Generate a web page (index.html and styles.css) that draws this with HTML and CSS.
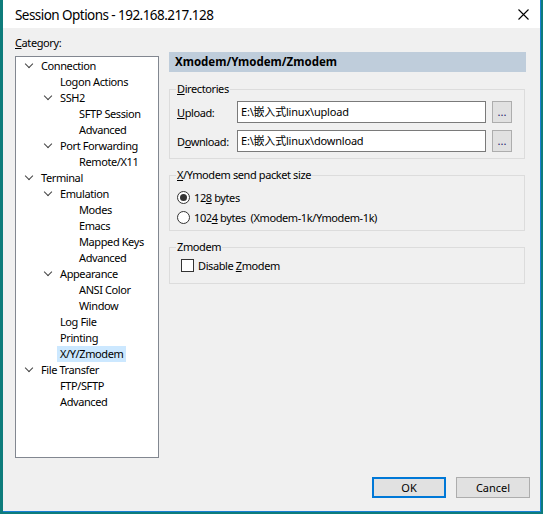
FILE: index.html
```html
<!DOCTYPE html>
<html lang="en">

  <head>
    <meta charset="UTF-8">
    <title>Session Options</title>
    <link rel="stylesheet" href="styles.css">
  </head>

  <body>
    <div class="window">
      <div class="titlebar">
        <span class="title">Session Options - 192.168.217.128</span>
        <svg class="close" width="11" height="11" viewBox="0 0 11 11">
          <path d="M0.5 0.5 L10.5 10.5 M10.5 0.5 L0.5 10.5" stroke="#000" stroke-width="1.1" fill="none"/>
        </svg>
      </div>

      <div class="main">
        <div class="category">
          <div class="cat-label"><u>C</u>ategory:</div>
          <div class="tree">
            <div class="node l0"><span class="tog"><i class="chev"></i></span>Connection</div>
            <div class="node l1"><span class="tog"></span>Logon Actions</div>
            <div class="node l1"><span class="tog"><i class="chev"></i></span>SSH2</div>
            <div class="node l2"><span class="tog"></span>SFTP Session</div>
            <div class="node l2"><span class="tog"></span>Advanced</div>
            <div class="node l1"><span class="tog"><i class="chev"></i></span>Port Forwarding</div>
            <div class="node l2"><span class="tog"></span>Remote/X11</div>
            <div class="node l0"><span class="tog"><i class="chev"></i></span>Terminal</div>
            <div class="node l1"><span class="tog"><i class="chev"></i></span>Emulation</div>
            <div class="node l2"><span class="tog"></span>Modes</div>
            <div class="node l2"><span class="tog"></span>Emacs</div>
            <div class="node l2"><span class="tog"></span>Mapped Keys</div>
            <div class="node l2"><span class="tog"></span>Advanced</div>
            <div class="node l1"><span class="tog"><i class="chev"></i></span>Appearance</div>
            <div class="node l2"><span class="tog"></span>ANSI Color</div>
            <div class="node l2"><span class="tog"></span>Window</div>
            <div class="node l1"><span class="tog"></span>Log File</div>
            <div class="node l1"><span class="tog"></span>Printing</div>
            <div class="node l1"><span class="tog"></span><span class="selected">X/Y/Zmodem</span></div>
            <div class="node l0"><span class="tog"><i class="chev"></i></span>File Transfer</div>
            <div class="node l1"><span class="tog"></span>FTP/SFTP</div>
            <div class="node l1"><span class="tog"></span>Advanced</div>
          </div>
        </div>

        <div class="panel">
          <div class="panel-header">Xmodem/Ymodem/Zmodem</div>

          <fieldset class="group dirs">
            <legend><u>D</u>irectories</legend>
            <div class="dir-row">
              <label><u>U</u>pload:</label>
              <div class="field">E:\嵌入式linux\upload</div>
              <button class="browse">...</button>
            </div>
            <div class="dir-row">
              <label>D<u>o</u>wnload:</label>
              <div class="field">E:\嵌入式linux\download</div>
              <button class="browse">...</button>
            </div>
          </fieldset>

          <fieldset class="group packets">
            <legend><u>X</u>/Ymodem send packet size</legend>
            <div class="opt"><span class="radio checked"></span>12<u>8</u> bytes</div>
            <div class="opt"><span class="radio"></span>102<u>4</u> bytes&nbsp; (Xmodem-1k/Ymodem-1k)</div>
          </fieldset>

          <fieldset class="group zmodem">
            <legend>Zmodem</legend>
            <div class="opt check-opt"><span class="checkbox"></span>Disable <u>Z</u>modem</div>
          </fieldset>
        </div>
      </div>

      <div class="footer">
        <button class="btn default">OK</button>
        <button class="btn">Cancel</button>
      </div>
    </div>
  </body>

</html>
```

FILE: styles.css
```css
body {
  margin: 0;
  background-color: #0e7c7b;
  font-family: "Noto Sans", "Noto Sans CJK SC", sans-serif;
  font-size: 11px;
  letter-spacing: -0.4px;
  color: #000;
}

.window {
  margin-left: 3px;
  width: 537px;
  height: 511px;
  background-color: #f0f0f0;
  border-right: 1px solid #1a7fd4;
  border-bottom: 1px solid #1a7fd4;
  display: flex;
  flex-direction: column;
}

.titlebar {
  height: 28px;
  background-color: #fff;
  display: flex;
  align-items: center;
  padding-left: 12px;
  padding-right: 10px;
}

.title {
  font-size: 13.5px;
  letter-spacing: -0.55px;
  flex: 1;
  padding-top: 1px;
}

.close {
  margin-right: 1px;
  margin-top: 1px;
}

.main {
  display: flex;
  align-items: flex-start;
  padding-left: 12px;
  gap: 10px;
}

.category {
  width: 144px;
  padding-top: 7px;
}

.cat-label {
  line-height: 16px;
  margin-bottom: 5px;
}

.tree {
  height: 399px;
  background-color: #fff;
  border: 1px solid #828790;
  padding-top: 1px;
}

.node {
  height: 16px;
  line-height: 16px;
  display: flex;
  align-items: center;
  padding-left: 4px;
  white-space: nowrap;
}

.node.l1 {
  padding-left: 23px;
}

.node.l2 {
  padding-left: 42px;
}

.tog {
  width: 21px;
  flex: none;
  display: flex;
  align-items: center;
}

.chev {
  display: block;
  width: 5px;
  height: 5px;
  margin-left: 6px;
  margin-top: -4px;
  border-right: 1.3px solid #444;
  border-bottom: 1.3px solid #444;
  transform: rotate(45deg);
}

.selected {
  background-color: #cce8ff;
  padding: 0 3px;
  margin-left: -3px;
}

.panel {
  width: 357px;
  margin-top: 24px;
}

.panel-header {
  height: 20px;
  line-height: 20px;
  background-color: #bfcddb;
  font-weight: bold;
  font-size: 11.5px;
  letter-spacing: 0;
  padding-left: 6px;
}

.group {
  margin: 8px 1px 0 0;
  border: 1px solid #dcdcdc;
  padding: 4px 7px 6px 7px;
}

.group legend {
  padding: 0 1px;
  line-height: 16px;
  margin-left: -1px;
}

.dirs {
  margin-top: 9px;
}

.dir-row {
  display: flex;
  align-items: center;
  height: 22px;
}

.dir-row + .dir-row {
  margin-top: 7px;
}

.dir-row label {
  width: 60px;
}

.field {
  width: 244px;
  height: 20px;
  line-height: 20px;
  background-color: #fff;
  border: 1px solid #7a7a7a;
  padding-left: 3px;
  letter-spacing: -0.2px;
  white-space: nowrap;
}

.browse {
  width: 20px;
  height: 22px;
  margin-left: 6px;
  padding: 0;
  background-color: #e1e1e1;
  border: 1px solid #adadad;
  font-family: inherit;
  font-size: 11px;
  color: #1a1a6e;
  line-height: 20px;
}

.packets {
  padding-bottom: 3px;
}

.opt {
  display: flex;
  align-items: center;
  height: 20px;
  white-space: pre;
}

.radio {
  width: 11px;
  height: 11px;
  border: 1px solid #333;
  border-radius: 50%;
  background-color: #fff;
  margin-right: 4px;
  position: relative;
}

.radio.checked::after {
  content: "";
  position: absolute;
  left: 2px;
  top: 2px;
  width: 7px;
  height: 7px;
  border-radius: 50%;
  background-color: #333;
}

.zmodem {
  padding-top: 2px;
  padding-bottom: 10px;
}

.check-opt {
  height: 16px;
  padding-left: 4px;
}

.checkbox {
  width: 11px;
  height: 11px;
  border: 1px solid #333;
  background-color: #fff;
  margin-right: 4px;
}

.footer {
  margin-top: auto;
  display: flex;
  justify-content: flex-end;
  gap: 10px;
  padding: 0 10px 13px 0;
}

.btn {
  width: 74px;
  height: 21px;
  padding: 0;
  background-color: #e1e1e1;
  border: 1px solid #adadad;
  font-family: inherit;
  font-size: 11px;
  letter-spacing: 0;
  color: #000;
}

.btn.default {
  border: 2px solid #0078d7;
}
```
